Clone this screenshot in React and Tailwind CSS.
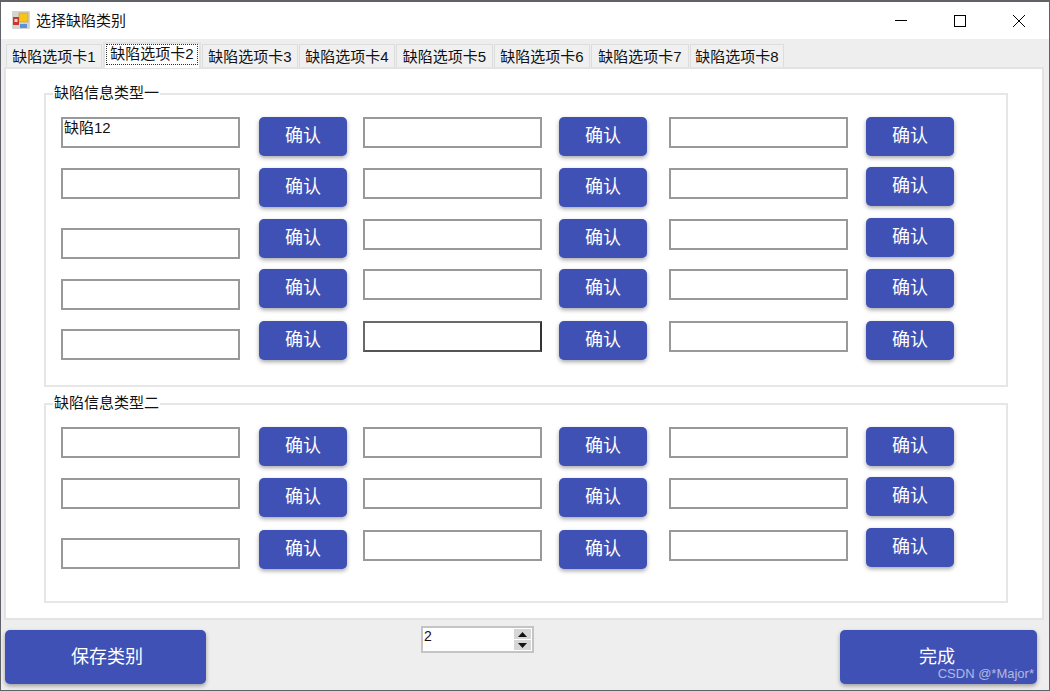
const FONT = "font-['Liberation_Sans','Noto_Sans_CJK_SC',sans-serif]";
const tabs = [
  ['w-[96px]', '缺陷选项卡1'], ['w-[98px]', '缺陷选项卡2'], ['w-[96px]', '缺陷选项卡3'], ['w-[96px]', '缺陷选项卡4'],
  ['w-[97px]', '缺陷选项卡5'], ['w-[96px]', '缺陷选项卡6'], ['w-[98px]', '缺陷选项卡7'], ['w-[94px]', '缺陷选项卡8'],
];

function Field({ mt, focused, children }) {
  return (
    <div className={`${mt} w-[179px] h-[31px] shrink-0 bg-white border-2 pl-[1px] text-[15px] leading-[17px] text-[#111] ${focused ? 'border-[#6a6a6a] border-r-[#333] border-b-[#555]' : 'border-[#999999]'}`}>
      {children}
    </div>
  );
}

function Confirm({ mt }) {
  return (
    <button className={`${mt} w-[88px] h-[39px] shrink-0 rounded-[5px] bg-[#3f51b5] text-white text-[18px] leading-[37px] shadow-[0_2px_4px_rgba(0,0,0,0.35)]`}>
      确认
    </button>
  );
}

function Group({ title, className, children }) {
  return (
    <div className={`relative ml-[38px] w-[964px] border-2 border-[#e6e6e6] flex ${className}`}>
      <span className="absolute left-[7px] top-[-11px] bg-white px-[1px] text-[15px] leading-[17px] text-[#111]">{title}</span>
      {children}
    </div>
  );
}

export default function App() {
  return (
    <div className={`${FONT} w-[1050px] h-[691px] flex flex-col bg-[#eeeeee] border border-[#5f6368] border-t-2 overflow-hidden`}>
      <div className="h-[37px] shrink-0 bg-white flex items-center pl-[11px]">
        <svg width="18" height="18" viewBox="0 0 18 18" className="mt-[-1px]">
          <rect x="0" y="0" width="18" height="18" rx="1" fill="#d4d4d4" />
          <rect x="7" y="2" width="9" height="9" fill="#f5c518" stroke="#c99a1a" strokeWidth="0.6" />
          <rect x="1" y="6" width="6" height="8" fill="#c9382f" />
          <rect x="2.5" y="8" width="3" height="3" fill="#f3d5d2" />
          <rect x="8" y="13" width="7" height="4" fill="#5b93d8" />
        </svg>
        <span className="ml-[6px] text-[15px] leading-[17px] text-[#111]">选择缺陷类别</span>
        <div className="ml-auto flex items-center text-black">
          <svg width="14" height="14" viewBox="0 0 14 14" className="mr-[45px]"><path d="M1 6.5H13" stroke="#000" strokeWidth="1" /></svg>
          <svg width="14" height="14" viewBox="0 0 14 14" className="mr-[45px]"><rect x="1.5" y="1.5" width="11" height="11" fill="none" stroke="#000" strokeWidth="1" /></svg>
          <svg width="14" height="14" viewBox="0 0 14 14" className="mr-[23px]"><path d="M1 1L13 13M13 1L1 13" stroke="#000" strokeWidth="1" /></svg>
        </div>
      </div>

      <div className="h-[28px] shrink-0 flex items-end pl-[5px] gap-[1px]">
        {tabs.map(([w, t], i) => (
          <div
            key={t}
            className={`${w} shrink-0 text-center text-[15px] text-[#111] whitespace-nowrap ${i === 1 ? 'h-[26px] bg-white border-2 border-b-0 border-[#e3e3e3] leading-[20px] relative z-10 mb-[-1px]' : 'h-[23px] bg-[#f0f0f0] border border-b-0 border-[#dddddd] leading-[24px]'}`}
          >
            {i === 1 ? <span className="inline-block border border-dotted border-[#333] h-[21px] leading-[18px] w-[92px] overflow-hidden">{t}</span> : t}
          </div>
        ))}
      </div>

      <div className="ml-[3px] w-[1040px] h-[553px] shrink-0 bg-white border-2 border-[#e3e3e3] pt-[24px]">
        <Group title="缺陷信息类型一" className="h-[294px]">
          <div className="flex flex-col w-[213px] pl-[15px]">
            <Field mt="mt-[22px]">缺陷12</Field>
            <Field mt="mt-[20px]" />
            <Field mt="mt-[29px]" />
            <Field mt="mt-[20px]" />
            <Field mt="mt-[19px]" />
          </div>
          <div className="flex flex-col w-[104px] mt-[22px]">
            <Confirm mt="mt-0" /><Confirm mt="mt-[12px]" /><Confirm mt="mt-[12px]" /><Confirm mt="mt-[11px]" /><Confirm mt="mt-[13px]" />
          </div>
          <div className="flex flex-col w-[196px] mt-[22px]">
            <Field mt="mt-0" /><Field mt="mt-[20px]" /><Field mt="mt-[20px]" /><Field mt="mt-[19px]" /><Field mt="mt-[21px]" focused />
          </div>
          <div className="flex flex-col w-[110px] mt-[22px]">
            <Confirm mt="mt-0" /><Confirm mt="mt-[12px]" /><Confirm mt="mt-[12px]" /><Confirm mt="mt-[11px]" /><Confirm mt="mt-[13px]" />
          </div>
          <div className="flex flex-col w-[197px] mt-[22px]">
            <Field mt="mt-0" /><Field mt="mt-[20px]" /><Field mt="mt-[20px]" /><Field mt="mt-[19px]" /><Field mt="mt-[21px]" />
          </div>
          <div className="flex flex-col w-[88px] mt-[22px]">
            <Confirm mt="mt-0" /><Confirm mt="mt-[11px]" /><Confirm mt="mt-[12px]" /><Confirm mt="mt-[12px]" /><Confirm mt="mt-[13px]" />
          </div>
        </Group>

        <Group title="缺陷信息类型二" className="mt-[16px] h-[200px]">
          <div className="flex flex-col w-[213px] pl-[15px]">
            <Field mt="mt-[22px]" />
            <Field mt="mt-[20px]" />
            <Field mt="mt-[29px]" />
          </div>
          <div className="flex flex-col w-[104px] mt-[22px]">
            <Confirm mt="mt-0" /><Confirm mt="mt-[12px]" /><Confirm mt="mt-[13px]" />
          </div>
          <div className="flex flex-col w-[196px] mt-[22px]">
            <Field mt="mt-0" /><Field mt="mt-[20px]" /><Field mt="mt-[21px]" />
          </div>
          <div className="flex flex-col w-[110px] mt-[22px]">
            <Confirm mt="mt-0" /><Confirm mt="mt-[12px]" /><Confirm mt="mt-[13px]" />
          </div>
          <div className="flex flex-col w-[197px] mt-[22px]">
            <Field mt="mt-0" /><Field mt="mt-[20px]" /><Field mt="mt-[21px]" />
          </div>
          <div className="flex flex-col w-[88px] mt-[22px]">
            <Confirm mt="mt-0" /><Confirm mt="mt-[11px]" /><Confirm mt="mt-[12px]" />
          </div>
        </Group>
      </div>

      <div className="flex-1 flex items-start pl-[4px] pr-[12px]">
        <button className="mt-[10px] w-[201px] h-[54px] pl-[3px] rounded-[5px] bg-[#3f51b5] text-white text-[18px] shadow-[0_2px_4px_rgba(0,0,0,0.35)]">保存类别</button>
        <div className="ml-[215px] mt-[6px] w-[113px] h-[27px] bg-white border-2 border-[#c4c4c4] flex text-[14px] leading-[17px] text-[#111] pl-[1px]">
          2
          <div className="ml-auto mr-[1px] mt-[1px] w-[17px] h-[21px] flex flex-col gap-[1px] bg-white">
            <div className="h-[10px] bg-[#d6d6d6] flex items-center justify-center">
              <svg width="9" height="5" viewBox="0 0 9 5"><path d="M4.5 0L9 5H0Z" fill="#111" /></svg>
            </div>
            <div className="h-[10px] bg-[#d6d6d6] flex items-center justify-center">
              <svg width="9" height="5" viewBox="0 0 9 5"><path d="M0 0H9L4.5 5Z" fill="#111" /></svg>
            </div>
          </div>
        </div>
        <button className="relative ml-auto mt-[10px] w-[197px] h-[54px] pr-[3px] rounded-[5px] bg-[#3f51b5] text-white text-[18px] shadow-[0_2px_4px_rgba(0,0,0,0.35)]">
          完成
          <span className="absolute right-[3px] bottom-[3px] text-[13px] leading-[15px] text-white/60 whitespace-nowrap">CSDN @*Major*</span>
        </button>
      </div>
    </div>
  );
}
